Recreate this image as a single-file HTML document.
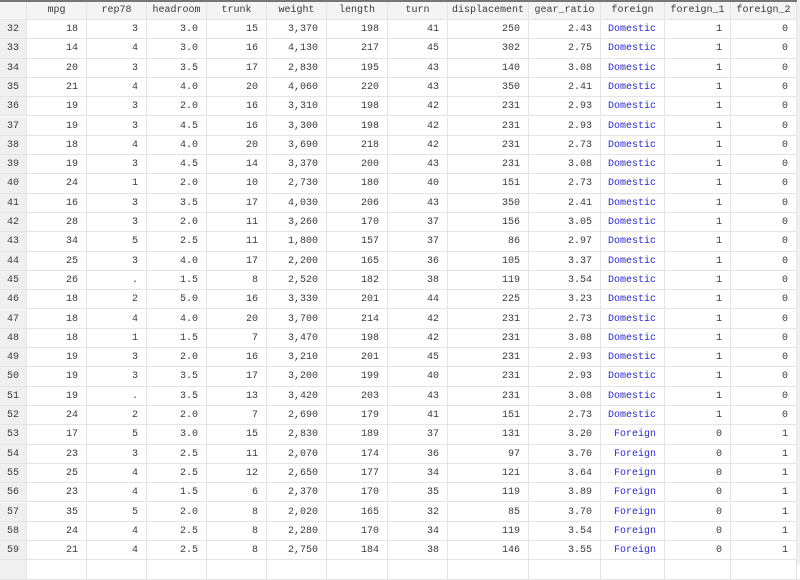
<!DOCTYPE html>
<html><head><style>
body{margin:0;width:800px;height:565px;overflow:hidden;background:#fff;font-family:"Liberation Mono",monospace;font-size:10px;color:#3a3a3a;position:relative}
.r{position:absolute;left:0;width:800px;height:19.3px;border-bottom:1px solid #e4e4e4;box-sizing:border-box}
.c{position:absolute;top:0;height:100%;border-right:1px solid #e4e4e4;box-sizing:border-box;line-height:19px;text-align:right;padding-right:8px;white-space:pre}
.h{background:#f4f4f4;border-top:2px solid #777}
.h .c{text-align:center;padding:0;line-height:17px}
.n{background:#f0f0f0;text-align:center!important;padding:0!important}
.b{color:#2a2ac8}
.sb{position:absolute;left:797px;top:0;width:3px;height:565px;background:#f0f0f0}
</style></head><body>
<div id="g"></div>
<div class="sb"></div>
<script>
var L=[0,27,87,147,207,267,327,388,448,529,601,665,731,797];
var H=["","mpg","rep78","headroom","trunk","weight","length","turn","displacement","gear_ratio","foreign","foreign_1","foreign_2"];
var D=`32 18 3 3.0 15 3,370 198 41 250 2.43 D
33 14 4 3.0 16 4,130 217 45 302 2.75 D
34 20 3 3.5 17 2,830 195 43 140 3.08 D
35 21 4 4.0 20 4,060 220 43 350 2.41 D
36 19 3 2.0 16 3,310 198 42 231 2.93 D
37 19 3 4.5 16 3,300 198 42 231 2.93 D
38 18 4 4.0 20 3,690 218 42 231 2.73 D
39 19 3 4.5 14 3,370 200 43 231 3.08 D
40 24 1 2.0 10 2,730 180 40 151 2.73 D
41 16 3 3.5 17 4,030 206 43 350 2.41 D
42 28 3 2.0 11 3,260 170 37 156 3.05 D
43 34 5 2.5 11 1,800 157 37 86 2.97 D
44 25 3 4.0 17 2,200 165 36 105 3.37 D
45 26 . 1.5 8 2,520 182 38 119 3.54 D
46 18 2 5.0 16 3,330 201 44 225 3.23 D
47 18 4 4.0 20 3,700 214 42 231 2.73 D
48 18 1 1.5 7 3,470 198 42 231 3.08 D
49 19 3 2.0 16 3,210 201 45 231 2.93 D
50 19 3 3.5 17 3,200 199 40 231 2.93 D
51 19 . 3.5 13 3,420 203 43 231 3.08 D
52 24 2 2.0 7 2,690 179 41 151 2.73 D
53 17 5 3.0 15 2,830 189 37 131 3.20 F
54 23 3 2.5 11 2,070 174 36 97 3.70 F
55 25 4 2.5 12 2,650 177 34 121 3.64 F
56 23 4 1.5 6 2,370 170 35 119 3.89 F
57 35 5 2.0 8 2,020 165 32 85 3.70 F
58 24 4 2.5 8 2,280 170 34 119 3.54 F
59 21 4 2.5 8 2,750 184 38 146 3.55 F`.split("\n");
var out='<div class="r h" style="top:0;height:20px">';
for(var i=0;i<13;i++)out+='<div class="c" style="left:'+L[i]+'px;width:'+(L[i+1]-L[i])+'px">'+H[i]+'</div>';
out+='</div>';
D.push("");
for(var r=0;r<D.length;r++){
 var v=D[r]?D[r].split(" "):[];
 if(v.length){var f=v[10];v[10]=f=="D"?"Domestic":"Foreign";v[11]=f=="D"?"1":"0";v[12]=f=="D"?"0":"1";}
 out+='<div class="r" style="top:'+(20+r*19.3)+'px">';
 for(var i=0;i<13;i++){
  var cls="c"+(i==0?" n":"")+(i==10?" b":"");
  out+='<div class="'+cls+'" style="left:'+L[i]+'px;width:'+(L[i+1]-L[i])+'px">'+(v[i]||"")+'</div>';
 }
 out+='</div>';
}
document.getElementById("g").innerHTML=out;
</script>
</body></html>
